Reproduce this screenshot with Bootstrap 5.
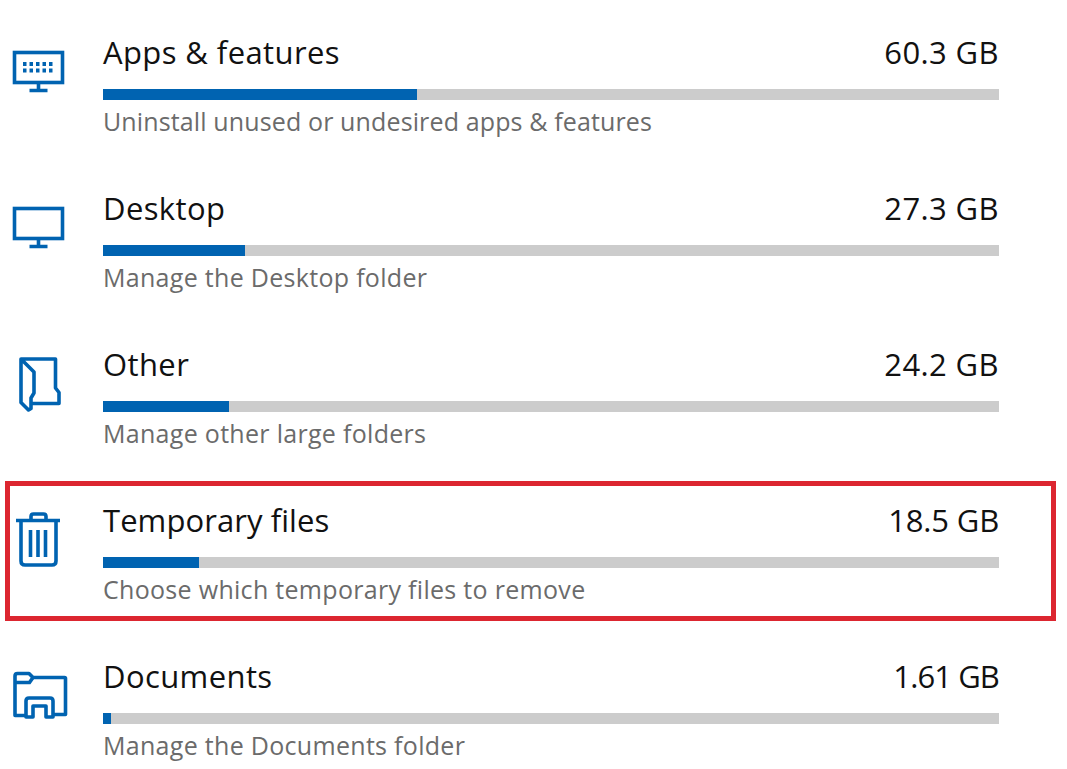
<!DOCTYPE html>
<html lang="en">
<head>
    <meta charset="UTF-8">
    <title>Storage usage</title>
    <link href="https://cdn.jsdelivr.net/npm/bootstrap@5.3.2/dist/css/bootstrap.min.css" rel="stylesheet">
    <style>
        html, body {
            height: 100%;
            background: #fff;
            overflow: hidden;
        }

        .storage-row {
            height: 156px;
            position: relative;
            font-family: "Open Sans", "Noto Sans", sans-serif;
        }

        .icon-col {
            width: 103px;
            padding-top: 30px;
        }

        .icon-col svg {
            display: block;
            fill: none;
            stroke: #0063b1;
            stroke-width: 3.6;
        }

        .body-col {
            width: 896px;
        }

        .row-title {
            height: 89px;
            padding-top: 31px;
            font-size: 31px;
            line-height: 42px;
            color: #111;
            letter-spacing: .4px;
        }

        .progress.usage-bar {
            height: 11px;
            border-radius: 0;
            background: #ccc;
        }

        .usage-bar .progress-bar {
            background: #0063b1;
        }

        .row-sub {
            margin-top: 4px;
            font-size: 25px;
            line-height: 34px;
            color: #6b6b6b;
            letter-spacing: .3px;
        }

        /* Open Sans runs a little wider than the original font on these strings */
        .row-sub.sub-tight {
            letter-spacing: .13px;
        }

        .title-tight {
            letter-spacing: .07px;
        }

        .val-tight {
            letter-spacing: -.17px;
        }

        .val-tighter {
            letter-spacing: -.9px;
        }

        .picked::after {
            content: "";
            position: absolute;
            left: 5px;
            top: 13px;
            width: 1051px;
            height: 140px;
            border: 5px solid #dc2630;
        }
    </style>
</head>
<body>

<div class="d-flex flex-column">

    <div class="storage-row d-flex">
        <div class="icon-col">
            <svg width="80" height="80" viewBox="0 0 80 80">
                <rect x="14.500" y="22.500" width="48" height="30"/>
                <path d="M38.500 54v6M29.500 60.500h18"/>
                <path stroke-width="4" stroke-dasharray="3.500 3" d="M23 34h30M23 40.500h30"/>
            </svg>
        </div>
        <div class="body-col">
            <div class="row-title d-flex justify-content-between"><span>Apps &amp; features</span><span>60.3 GB</span></div>
            <div class="progress usage-bar"><div class="progress-bar" style="width: 35%"></div></div>
            <div class="row-sub sub-tight">Uninstall unused or undesired apps &amp; features</div>
        </div>
    </div>

    <div class="storage-row d-flex">
        <div class="icon-col">
            <svg width="80" height="80" viewBox="0 0 80 80">
                <rect x="14.500" y="22.500" width="48" height="30"/>
                <path d="M38.500 54v6M29.500 60.500h18"/>
            </svg>
        </div>
        <div class="body-col">
            <div class="row-title d-flex justify-content-between"><span>Desktop</span><span>27.3 GB</span></div>
            <div class="progress usage-bar"><div class="progress-bar" style="width: 15.8%"></div></div>
            <div class="row-sub">Manage the Desktop folder</div>
        </div>
    </div>

    <div class="storage-row d-flex">
        <div class="icon-col">
            <svg width="80" height="80" viewBox="0 0 80 80">
                <path stroke-linejoin="round" d="M21 17h34.500v29l3.500 4.500v11H32M21 17l13 13v21l-3 5v10.500L28.500 68 21 60.500z"/>
            </svg>
        </div>
        <div class="body-col">
            <div class="row-title d-flex justify-content-between"><span>Other</span><span>24.2 GB</span></div>
            <div class="progress usage-bar"><div class="progress-bar" style="width: 14.1%"></div></div>
            <div class="row-sub">Manage other large folders</div>
        </div>
    </div>

    <div class="storage-row d-flex picked">
        <div class="icon-col">
            <svg width="80" height="80" viewBox="0 0 80 80">
                <path d="M16 22.500h44M31 22v-3.500q0-2.500 2.500-2.500h10q2.500 0 2.500 2.500V22"/>
                <path d="M21 22v41q0 4 4 4h27q4 0 4-4V22"/>
                <path d="M30.500 32v27M38 32v27M45.500 32v27"/>
            </svg>
        </div>
        <div class="body-col">
            <div class="row-title d-flex justify-content-between"><span class="title-tight">Temporary files</span><span class="val-tight">18.5 GB</span></div>
            <div class="progress usage-bar"><div class="progress-bar" style="width: 10.7%"></div></div>
            <div class="row-sub">Choose which temporary files to remove</div>
        </div>
    </div>

    <div class="storage-row d-flex">
        <div class="icon-col">
            <svg width="80" height="80" viewBox="0 0 80 80">
                <path stroke-linejoin="round" d="M26 61.500H15V22q0-2.500 2.500-2.500H29l4 4h31.500q1 0 1 1v36H54"/>
                <path d="M15 28.500h14.500l3.500-5"/>
                <path stroke-linejoin="round" d="M26 63V47q0-3 3-3h21q3 0 3 3v16h-7V52H33v11z"/>
            </svg>
        </div>
        <div class="body-col">
            <div class="row-title d-flex justify-content-between"><span>Documents</span><span class="val-tighter">1.61 GB</span></div>
            <div class="progress usage-bar"><div class="progress-bar" style="width: 0.9%"></div></div>
            <div class="row-sub">Manage the Documents folder</div>
        </div>
    </div>

</div>

<script src="https://cdn.jsdelivr.net/npm/bootstrap@5.3.2/dist/js/bootstrap.bundle.min.js"></script>
</body>
</html>
